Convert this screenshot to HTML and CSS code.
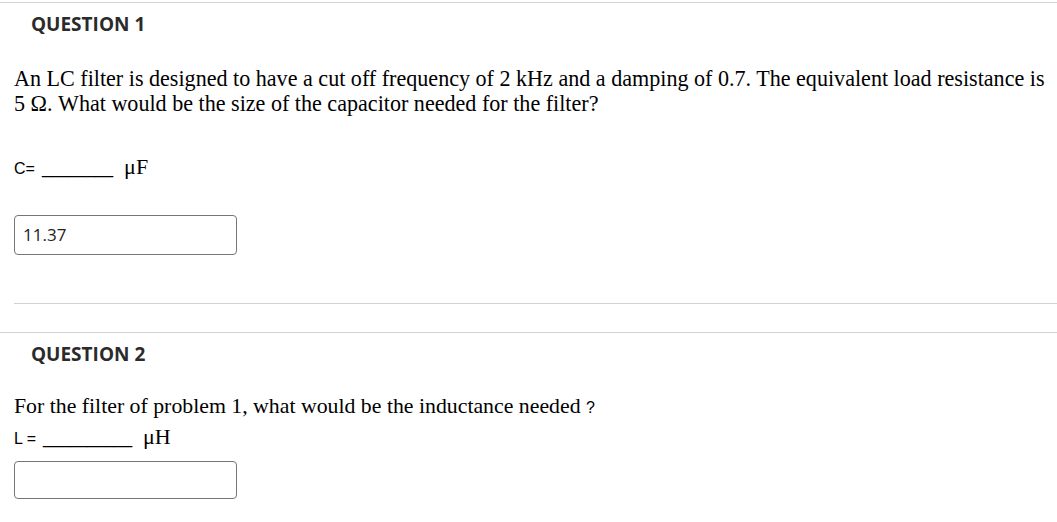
FILE: index.html
```html
<!DOCTYPE html>
<html>
<head>
<meta charset="utf-8">
<link rel="stylesheet" href="styles.css">
</head>
<body>
<div class="page">
  <section class="question q1">
    <h3 class="q-title">QUESTION 1</h3>
    <div class="q-body">
      <p class="prompt">An LC filter is designed to have a cut off frequency of 2 kHz and a damping of 0.7. The equivalent load resistance is 5&nbsp;Ω. What would be the size of the capacitor needed for the filter?</p>
      <p class="blank-line c-line"><span class="sans">C=</span><span class="sans blank c-blank">________</span><span class="serif unit">μF</span></p>
      <div class="answer">11.37</div>
    </div>
    <div class="q-foot"></div>
  </section>
  <section class="question q2">
    <h3 class="q-title">QUESTION 2</h3>
    <div class="q-body">
      <p class="prompt single">For the filter of problem 1, what would be the inductance needed <span class="qmark">?</span></p>
      <p class="blank-line l-line"><span class="sans">L =</span><span class="sans blank l-blank">__________</span><span class="serif unit">μH</span></p>
      <div class="answer empty"></div>
    </div>
  </section>
</div>
</body>
</html>
```

FILE: styles.css
```css
html, body {
  margin: 0;
  padding: 0;
  background: #ffffff;
}
.page {
  padding-top: 2px;
}
.question {
  border-top: 1px solid #d2d2d2;
}
.q-title {
  margin: 0;
  padding: 9px 0 0 31px;
  font-family: "Open Sans", sans-serif;
  font-weight: 700;
  font-size: 19px;
  line-height: 24px;
  color: #2b2b2b;
}
.q-body {
  padding: 0 4px 0 14px;
}
.prompt {
  margin: 30px 0 0 0;
  font-family: "Liberation Serif", "Times New Roman", serif;
  font-size: 22.1px;
  line-height: 25px;
  color: #000;
}
.blank-line {
  margin: 0;
  color: #000;
  font-family: "Liberation Serif", "Times New Roman", serif;
  font-size: 22px;
  line-height: 26px;
}
.sans {
  font-family: "Liberation Sans", Arial, sans-serif;
  font-size: 16px;
}
.c-blank {
  margin-left: 7px;
}
.l-blank {
  margin-left: 7px;
}
.unit {
  margin-left: 11px;
}
.c-line {
  margin-top: 38px;
}
.answer {
  box-sizing: border-box;
  width: 223px;
  height: 40px;
  border: 1px solid #767676;
  border-radius: 4px;
  padding: 0 8px;
  font-family: "Open Sans", sans-serif;
  font-size: 17px;
  line-height: 38px;
  color: #222;
}
.q1 .answer {
  margin-top: 33px;
}
.q-foot {
  margin: 48px 0 0 14px;
  border-top: 1px solid #d2d2d2;
  height: 28px;
}
.prompt.single {
  margin-top: 28px;
  font-size: 21.8px;
}
.qmark {
  font-family: "Liberation Sans", Arial, sans-serif;
  font-size: 16px;
}
.l-line {
  margin-top: 4px;
}
.q2 .answer {
  margin-top: 9px;
  height: 38px;
}
```
